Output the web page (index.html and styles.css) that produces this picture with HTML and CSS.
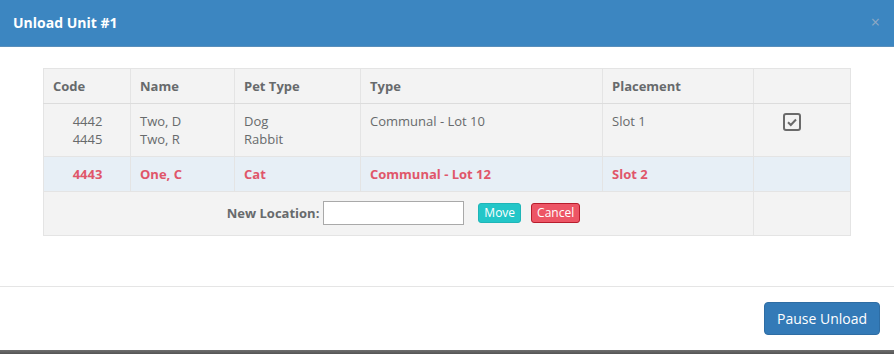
FILE: index.html
```html
<!DOCTYPE html>
<html>
<head>
<meta charset="utf-8">
<link rel="stylesheet" href="styles.css">
</head>
<body>
<div class="modal">
  <div class="modal-header">
    <h4 class="modal-title">Unload Unit #1</h4>
    <span class="close">&times;</span>
  </div>
  <div class="modal-body">
    <table class="grid">
      <colgroup>
        <col class="c1"><col class="c2"><col class="c3"><col class="c4"><col class="c5"><col class="c6">
      </colgroup>
      <thead>
        <tr><th>Code</th><th>Name</th><th>Pet Type</th><th>Type</th><th>Placement</th><th></th></tr>
      </thead>
      <tbody>
        <tr>
          <td class="code">4442<br>4445</td>
          <td>Two, D<br>Two, R</td>
          <td>Dog<br>Rabbit</td>
          <td>Communal - Lot 10</td>
          <td>Slot 1</td>
          <td class="chk">
            <svg width="18" height="18" viewBox="0 0 18 18"><rect x="1" y="1" width="16" height="16" rx="2" fill="none" stroke="#6a6a6a" stroke-width="2"/><path d="M5 9.2 L7.8 12 L13 6.5" fill="none" stroke="#6a6a6a" stroke-width="2"/></svg>
          </td>
        </tr>
        <tr class="active">
          <td class="code">4443</td>
          <td>One, C</td>
          <td>Cat</td>
          <td>Communal - Lot 12</td>
          <td>Slot 2</td>
          <td></td>
        </tr>
        <tr class="loc">
          <td colspan="5">
            <div class="loc-form">
              <label>New Location:</label>
              <input type="text" class="loc-input">
              <button class="btn-xs info">Move</button>
              <button class="btn-xs danger">Cancel</button>
            </div>
          </td>
          <td></td>
        </tr>
      </tbody>
    </table>
  </div>
  <div class="modal-footer">
    <button class="btn-primary">Pause Unload</button>
  </div>
</div>
<div class="backdrop-strip"></div>
</body>
</html>
```

FILE: styles.css
```css
html, body {
  margin: 0;
  padding: 0;
  background: #fff;
  font-family: "Open Sans", "Liberation Sans", sans-serif;
  font-size: 13px;
  color: #676a6c;
}
.modal {
  width: 894px;
  height: 350px;
  display: flex;
  flex-direction: column;
}
.modal-header {
  height: 47px;
  background: #3c86c1;
  display: flex;
  align-items: center;
  justify-content: space-between;
  padding: 0 14px 0 13px;
  box-sizing: border-box;
  border-bottom: 1px solid #5a8fbb;
}
.modal-title {
  margin: 0;
  color: #fff;
  font-size: 14px;
  font-weight: 700;
  line-height: 20px;
  padding-bottom: 1px;
}
.close {
  color: #8fa9c4;
  font-size: 16px;
  line-height: 16px;
  padding-bottom: 2px;
}
.modal-body {
  padding: 21px 44px 0 43px;
  height: 240px;
  box-sizing: border-box;
  border-bottom: 1px solid #e5e5e5;
}
.grid {
  width: 807px;
  border-collapse: collapse;
  table-layout: fixed;
  background: #f3f3f3;
}
.c1 { width: 87px; }
.c2 { width: 104px; }
.c3 { width: 126px; }
.c4 { width: 242px; }
.c5 { width: 151px; }
.c6 { width: 97px; }
.grid th, .grid td {
  border: 1px solid #e4e4e4;
  padding: 8px 8px 8px 9px;
  line-height: 18px;
  text-align: left;
  vertical-align: top;
}
.grid th {
  font-weight: 700;
  height: 18px;
  border-bottom: 1px solid #dcdcdc;
}
.grid td.code {
  text-align: center;
}
.grid td.chk {
  padding: 9px 0 0 29px;
}
.chk svg {
  display: block;
}
.grid tr.active td {
  background: #e7eff6;
  color: #e0566a;
  font-weight: 700;
}
.grid tr.loc td {
  padding: 9px 8px 10px 8px;
  vertical-align: middle;
}
.loc-form {
  display: flex;
  align-items: center;
  justify-content: center;
  padding-left: 10px;
}
.loc-form label {
  font-weight: 700;
  margin-right: 4px;
}
.loc-input {
  width: 141px;
  height: 24px;
  box-sizing: border-box;
  border: 1px solid #a9a9a9;
  background: #fff;
  margin: 0 14px 0 0;
  padding: 0 2px;
}
.btn-xs {
  font-family: "Open Sans", "Liberation Sans", sans-serif;
  font-size: 12px;
  line-height: 18px;
  padding: 0 5px;
  border-radius: 3px;
  color: #fff;
  border: 1px solid;
  cursor: pointer;
}
.btn-xs.info {
  background: #23c6c8;
  border-color: #1fb5b7;
  margin-right: 10px;
}
.btn-xs.danger {
  background: #ed5565;
  border-color: #b71c2c;
}
.modal-footer {
  display: flex;
  justify-content: flex-end;
  padding: 15px 14px 0 0;
}
.btn-primary {
  font-family: "Open Sans", "Liberation Sans", sans-serif;
  font-size: 14px;
  line-height: 20px;
  padding: 6px 11px;
  width: 116px;
  height: 33px;
  box-sizing: border-box;
  color: #fff;
  background: #337ab7;
  border: 1px solid #2e6da4;
  border-radius: 4px;
}
.backdrop-strip {
  height: 4px;
  background: linear-gradient(#6e6e6e, #555);
}
```
